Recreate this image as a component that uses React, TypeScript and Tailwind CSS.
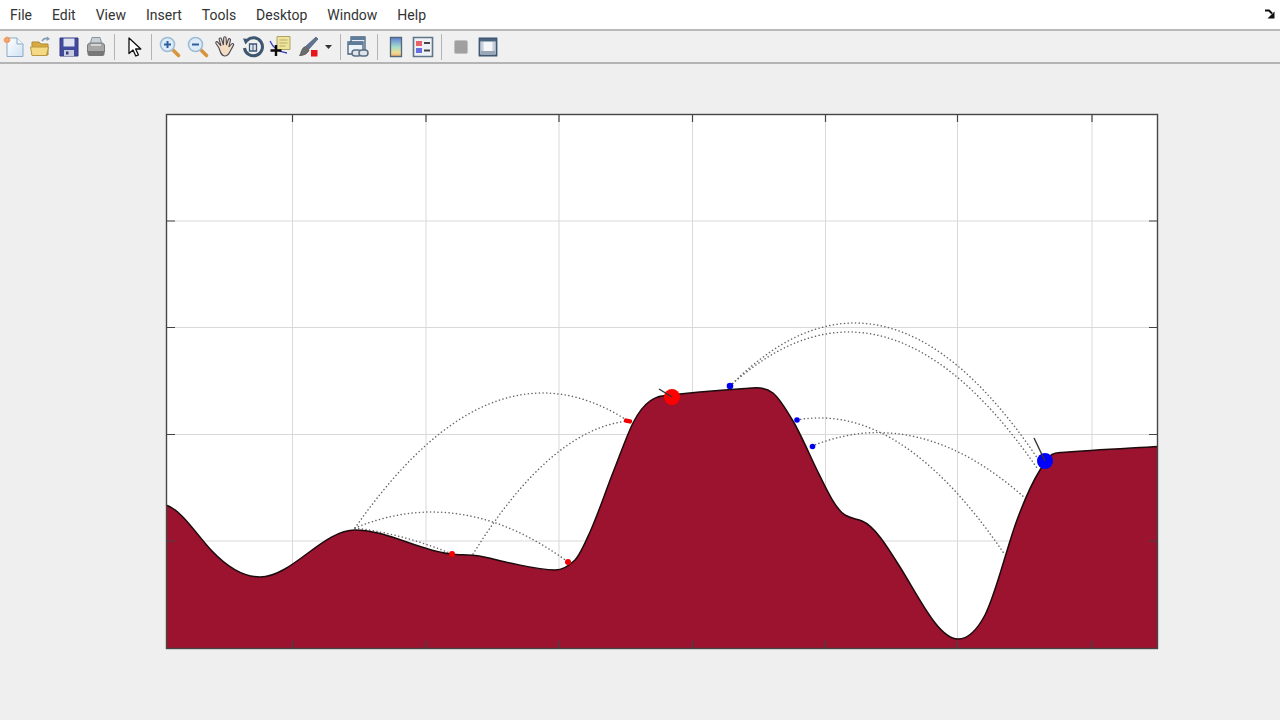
import React from 'react';

type Pt = [number, number];
type Knot = [number, number, number];

// surface of the terrain in page pixels: x, y, slope
const TERRAIN: Knot[] = [
    [166, 505, 0.3], [212, 551, 1.05], [260, 577, 0], [308, 553, -0.75], [355, 530, 0],
    [450, 554, 0.12], [475, 555.5, 0.1], [510, 563, 0.2], [555, 570, 0], [575, 560, -1],
    [590, 532, -2.2], [614, 470, -2.5], [633, 423, -2], [650, 401, -0.7], [662, 396, -0.12], [745, 388.5, -0.07],
    [760, 388, 0.1], [773, 393, 0.8], [793, 421, 1.7], [817, 470, 2.05], [845, 515, 0.6],
    [862, 521, 0.4], [900, 567, 1.6], [958, 639, 0], [985, 615, -1.9], [1017, 520, -2.7],
    [1040, 470, -1.6], [1052, 454.5, -0.6], [1062, 452.5, -0.08], [1158, 446.5, -0.06],
];

// start, peak, end of each shot
const SHOTS: [Pt, Pt, Pt][] = [
    [[355, 528], [540, 393], [628, 421]],
    [[355, 528], [432, 512], [568, 562]],
    [[355, 528], [380, 532], [452, 554]],
    [[473, 554], [590, 432], [628, 421]],
    [[730, 386], [857, 323], [1040, 462]],
    [[730, 386], [850, 332], [1037, 468]],
    [[797, 420], [815, 418], [1005, 555]],
    [[812, 446], [890, 433], [1025, 498]],
];

const GRID_X = [292.5, 426, 559, 692.5, 825.5, 957.5, 1092];
const GRID_Y = [221, 327.5, 434.5, 541];

function surfacePath(knots: Knot[]) {
    let d = `M${knots[0][0]} ${knots[0][1]}`;
    for (let i = 0; i < knots.length - 1; i++) {
        const [x1, y1, m1] = knots[i];
        const [x2, y2, m2] = knots[i + 1];
        const dx = (x2 - x1) / 3;
        d += ` C${x1 + dx} ${y1 + m1 * dx} ${x2 - dx} ${y2 - m2 * dx} ${x2} ${y2}`;
    }
    return d;
}

function shotPath([a, b, c]: [Pt, Pt, Pt]) {
    const y = (x: number) =>
        (a[1] * (x - b[0]) * (x - c[0])) / ((a[0] - b[0]) * (a[0] - c[0])) +
        (b[1] * (x - a[0]) * (x - c[0])) / ((b[0] - a[0]) * (b[0] - c[0])) +
        (c[1] * (x - a[0]) * (x - b[0])) / ((c[0] - a[0]) * (c[0] - b[0]));
    const parts: string[] = [];
    for (let i = 0; i <= 60; i++) {
        const x = a[0] + ((c[0] - a[0]) * i) / 60;
        parts.push(`${i === 0 ? 'M' : 'L'}${x.toFixed(1)} ${y(x).toFixed(1)}`);
    }
    return parts.join(' ');
}

function Icon({ children }: { children: React.ReactNode }) {
    return (
        <svg width="24" height="24" viewBox="0 0 24 24" className="shrink-0">
            {children}
        </svg>
    );
}

function Tool({ children }: { children: React.ReactNode }) {
    return <div className="flex h-full w-[27.5px] shrink-0 items-center justify-center">{children}</div>;
}

function Sep({ className }: { className: string }) {
    return <div className={`h-[26px] w-px shrink-0 bg-[#b4b4b4] ${className}`} />;
}

const Lens = ({ minus }: { minus?: boolean }) => (
    <>
        <path d="M14 14l6.5 6.5" stroke="#d8953f" strokeWidth="3.6" strokeLinecap="round" />
        <circle cx="9.5" cy="9.5" r="7" fill="#dcebf7" stroke="#9dbbd4" strokeWidth="1.6" />
        <path d="M6 9.5h7" stroke="#2f5f9a" strokeWidth="2" />
        {!minus && <path d="M9.5 6v7" stroke="#2f5f9a" strokeWidth="2" />}
    </>
);

const MENU = ['File', 'Edit', 'View', 'Insert', 'Tools', 'Desktop', 'Window', 'Help'];

export default function App() {
    const surface = surfacePath(TERRAIN);

    return (
        <div className="flex h-[720px] w-[1280px] flex-col overflow-hidden bg-[#efefef] font-['Roboto',sans-serif]">
            {/* Menu bar */}
            <div className="flex h-[31px] shrink-0 items-center justify-between border-b-2 border-[#b9b9b9] bg-white pl-[10px] pr-[4px]">
                <div className="flex gap-[20px] pt-[1px] text-[14px] text-[#333]">
                    {MENU.map((m) => (
                        <span key={m}>{m}</span>
                    ))}
                </div>
                <svg width="12" height="12" viewBox="0 0 12 12" className="mb-[1px]">
                    <path d="M1 2.5h4l3 3" fill="none" stroke="#111" strokeWidth="2" />
                    <path d="M10.5 3.5v7h-7z" fill="#111" />
                </svg>
            </div>

            {/* Toolbar */}
            <div className="flex h-[33px] shrink-0 items-center border-b-2 border-[#b4b4b4] bg-[#f0f0f0]">
                <Tool>
                    <Icon>
                        <defs>
                            <linearGradient id="doc" x1="0" y1="0" x2="1" y2="1">
                                <stop offset="0" stopColor="#ffffff" />
                                <stop offset="1" stopColor="#cfe3f5" />
                            </linearGradient>
                        </defs>
                        <path d="M5 3h10l6 6v12.5H5z" fill="url(#doc)" stroke="#8aa9c6" />
                        <path d="M15 3v6h6" fill="#f3f8fc" stroke="#8aa9c6" />
                        <circle cx="5" cy="5" r="3" fill="#ef8f50" />
                        <path d="M5 1v8M1 5h8" stroke="#f4b183" />
                    </Icon>
                </Tool>
                <Tool>
                    <Icon>
                        <path d="M3 7h7l2 2h7v11H3z" fill="#d9aa3f" stroke="#a98a3a" />
                        <path d="M1.5 12h18l-2 8.5H3z" fill="#f5da85" stroke="#b9973f" />
                        <path d="M13 6c2-3 4-3 6-2" fill="none" stroke="#7f9bb3" strokeWidth="1.6" />
                        <path d="M18 1.5l3 2.5-3.5 2z" fill="#7f9bb3" />
                    </Icon>
                </Tool>
                <Tool>
                    <Icon>
                        <path d="M3 3h18v18H3z" fill="#414a9c" stroke="#343c80" />
                        <path d="M6.5 3.5h11v8h-11z" fill="#dfe2f0" />
                        <path d="M7 15h10v6H7z" fill="#c8cce0" />
                        <path d="M9 16.500h2.500v3H9z" fill="#343c80" />
                    </Icon>
                </Tool>
                <Tool>
                    <Icon>
                        <path d="M8 2.5h8l2 7H6z" fill="#c9d0d6" stroke="#8b9298" />
                        <path d="M3.5 11c0-2 1-3 3-3h11c2 0 3 1 3 3v6h-17z" fill="#a6a6a6" stroke="#7a7a7a" />
                        <path d="M3.5 16h17v3c0 1-1 2-2 2h-13c-1 0-2-1-2-2z" fill="#777" />
                        <path d="M7 10h10" stroke="#e3e3e3" strokeWidth="1.5" />
                    </Icon>
                </Tool>
                <Sep className="ml-[4px] mr-[5px]" />
                <Tool>
                    <Icon>
                        <path d="M7 3v15.5l4-3.5 2.8 6 2.6-1.2-2.8-5.8h5.2z" fill="#fff" stroke="#111" strokeWidth="1.3" strokeLinejoin="round" />
                    </Icon>
                </Tool>
                <Sep className="ml-[3.5px] mr-[4.5px]" />
                <Tool>
                    <Icon>
                        <Lens />
                    </Icon>
                </Tool>
                <Tool>
                    <Icon>
                        <Lens minus />
                    </Icon>
                </Tool>
                <Tool>
                    <Icon>
                        <path
                            d="M6 13L3 8.5c-.8-1.5 1-2.5 2-1.2L8 11 6.2 4.6c-.4-1.6 1.8-2.2 2.3-.7L10.400 10 10.700 3c0-1.700 2.300-1.700 2.400 0L13.400 10 15.300 4.500c.5-1.500 2.600-.9 2.200.7L15.800 12l2.700-3c1.100-1.200 2.800 0 1.900 1.400L16.800 17c-1 2-2.300 4-5 4-3.600 0-4.300-3.600-5.800-8z"
                            fill="#f4dcc2"
                            stroke="#4a4a55"
                            strokeWidth="1.1"
                        />
                    </Icon>
                </Tool>
                <Tool>
                    <Icon>
                        <path d="M6 5.500A9 9 0 1 1 3.500 13" fill="none" stroke="#3d5672" strokeWidth="3" />
                        <path d="M2 3.500l7 .5-4.500 5.500z" fill="#3d5672" />
                        <path d="M8.500 9h7v7h-7z" fill="#dfe8f0" stroke="#3d5672" strokeWidth="1.300" />
                        <path d="M12 9v7" stroke="#3d5672" />
                    </Icon>
                </Tool>
                <Tool>
                    <Icon>
                        <path d="M2 6c3 7 8 11 17 12" fill="none" stroke="#3a3fc0" strokeWidth="1.300" />
                        <path d="M9 1.500h13v13H9z" fill="#f0e49a" stroke="#a9a569" />
                        <path d="M11.500 5h8M11.500 8h8M11.500 11h6" stroke="#b3ad74" />
                        <path d="M8 10v11M2.500 15.500h11" stroke="#0c0c0c" strokeWidth="2.400" />
                    </Icon>
                </Tool>
                <Tool>
                    <Icon>
                        <path d="M20 2l2 2-9 10-3-3z" fill="#5d7390" stroke="#3f4f66" strokeWidth=".6" />
                        <path d="M9.500 11.500l3.500 3.500c-1.500 4-5.500 5.500-9.500 5.500 2-2 1.500-7.500 6-9z" fill="#6c6c6c" stroke="#3f3f3f" strokeWidth=".7" />
                        <path d="M15 15h6.500v6.500H15z" fill="#e8141c" />
                    </Icon>
                </Tool>
                <div className="flex h-full w-[14px] shrink-0 items-center justify-center">
                    <svg width="7" height="4" viewBox="0 0 7 4">
                        <path d="M0 0h7L3.500 4z" fill="#333" />
                    </svg>
                </div>
                <Sep className="ml-[4.5px] mr-[3.5px]" />
                <Tool>
                    <Icon>
                        <path d="M5 2h14v13H5z" fill="#e6edf4" stroke="#45617f" strokeWidth="1.300" />
                        <path d="M5 2h14v3H5z" fill="#5f7c9b" />
                        <path d="M2 7h15v12H2z" fill="#eef3f8" stroke="#45617f" strokeWidth="1.300" />
                        <path d="M2 7h15v3H2z" fill="#5f7c9b" />
                        <rect x="6" y="15" width="9" height="6" rx="3" fill="#dfe5ea" stroke="#5b6e83" strokeWidth="1.500" />
                        <rect x="13" y="15" width="9" height="6" rx="3" fill="#dfe5ea" stroke="#5b6e83" strokeWidth="1.500" />
                    </Icon>
                </Tool>
                <Sep className="ml-[5px] mr-[4px]" />
                <Tool>
                    <Icon>
                        <defs>
                            <linearGradient id="bar" x1="0" y1="0" x2="0" y2="1">
                                <stop offset="0" stopColor="#5c7fd8" />
                                <stop offset=".5" stopColor="#a8dccb" />
                                <stop offset=".8" stopColor="#f0dc90" />
                                <stop offset="1" stopColor="#f0b070" />
                            </linearGradient>
                        </defs>
                        <path d="M6.500 2.500h11v19h-11z" fill="url(#bar)" stroke="#54677c" strokeWidth="1.300" />
                    </Icon>
                </Tool>
                <Tool>
                    <Icon>
                        <path d="M2.500 2.500h19v19h-19z" fill="#eef2f6" stroke="#5f7489" strokeWidth="1.600" />
                        <path d="M5 6h6v5H5z" fill="#e8626a" />
                        <path d="M5 13h6v5H5z" fill="#666ee0" />
                        <path d="M13 8h6M13 15.500h6" stroke="#444" strokeWidth="2" />
                    </Icon>
                </Tool>
                <Sep className="ml-[4px] mr-[5px]" />
                <Tool>
                    <Icon>
                        <rect x="5.500" y="5.500" width="13" height="13" rx="1.500" fill="#a0a0a0" stroke="#c0c0c0" />
                    </Icon>
                </Tool>
                <Tool>
                    <Icon>
                        <path d="M3.500 3.500h17v17h-17z" fill="#f4f6f9" />
                        <path d="M5 7h2.500v9H5zM16.500 7H19v9h-2.500z" fill="#c4cdd8" />
                        <path d="M5 16h14v3H5z" fill="#98a6b6" />
                        <path d="M3.500 3.500h17v17h-17z" fill="none" stroke="#3d5672" strokeWidth="1.800" />
                        <path d="M3.500 4h17v2.500h-17z" fill="#4d6480" />
                    </Icon>
                </Tool>
            </div>

            {/* Axes */}
            <div className="pl-[165px] pt-[49px]">
                <svg width="995" height="538" viewBox="165 113 995 538" className="block">
                    <rect x="166" y="114" width="992" height="535" fill="#fff" />
                    {GRID_X.map((x) => (
                        <path key={x} d={`M${x} 114V649`} stroke="#d9d9d9" strokeWidth="1" />
                    ))}
                    {GRID_Y.map((y) => (
                        <path key={y} d={`M166 ${y}H1158`} stroke="#d9d9d9" strokeWidth="1" />
                    ))}
                    {SHOTS.map((s, i) => (
                        <path
                            key={i}
                            d={shotPath(s)}
                            fill="none"
                            stroke="#666"
                            strokeWidth="1.500"
                            strokeLinecap="round"
                            strokeDasharray="0.100 3.600"
                        />
                    ))}
                    <path d={`${surface} L1158 649 L166 649 Z`} fill="#9b132e" />
                    <path d={surface} fill="none" stroke="#1c0a0c" strokeWidth="1.500" />
                    {GRID_X.map((x) => (
                        <path key={x} d={`M${x} 114v8M${x} 649v-8`} stroke="#444" strokeWidth="1.200" />
                    ))}
                    {GRID_Y.map((y) => (
                        <path key={y} d={`M166 ${y}h9M1158 ${y}h-9`} stroke="#444" strokeWidth="1.200" />
                    ))}
                    <rect x="166.500" y="114.500" width="991" height="534" fill="none" stroke="#454545" strokeWidth="1.400" />

                    {/* projectiles */}
                    <path d="M626 420.600l4 .8" stroke="#f00000" strokeWidth="4.400" strokeLinecap="round" />
                    <circle cx="452" cy="554" r="3" fill="#f00000" />
                    <circle cx="568" cy="562" r="3" fill="#f00000" />
                    <circle cx="730" cy="386" r="3.300" fill="#0000f0" />
                    <circle cx="797" cy="420" r="2.800" fill="#0000f0" />
                    <circle cx="812.500" cy="446.500" r="2.800" fill="#0000f0" />

                    {/* tanks */}
                    <circle cx="672" cy="397" r="8" fill="#ff0000" />
                    <path d="M659 389l13 8" stroke="#333" strokeWidth="1.400" />
                    <circle cx="1045" cy="461" r="8" fill="#0000ff" />
                    <path d="M1034 438l11 23" stroke="#333" strokeWidth="1.400" />
                </svg>
            </div>
        </div>
    );
}
